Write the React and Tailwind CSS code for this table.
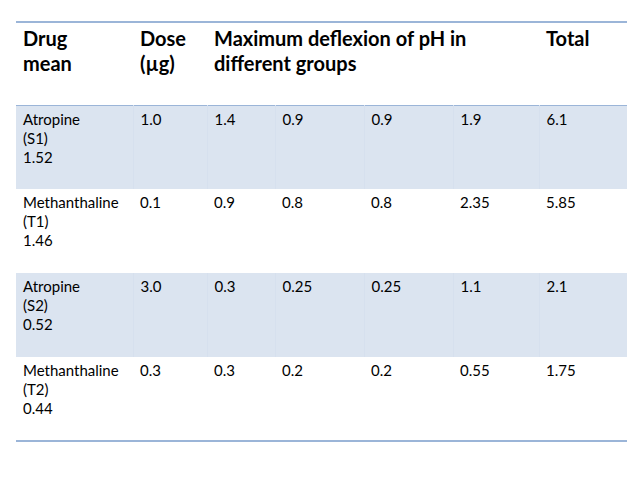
import React from 'react';

const rows = [
  { name: ['Atropine', '(S1)', '1.52'], vals: ['1.0', '1.4', '0.9', '0.9', '1.9', '6.1'], band: true },
  { name: ['Methanthaline', '(T1)', '1.46'], vals: ['0.1', '0.9', '0.8', '0.8', '2.35', '5.85'], band: false },
  { name: ['Atropine', '(S2)', '0.52'], vals: ['3.0', '0.3', '0.25', '0.25', '1.1', '2.1'], band: true },
  { name: ['Methanthaline', '(T2)', '0.44'], vals: ['0.3', '0.3', '0.2', '0.2', '0.55', '1.75'], band: false },
];

const widths = ['w-[117px]', 'w-[74px]', 'w-[68px]', 'w-[89px]', 'w-[89px]', 'w-[86px]', 'w-[88px]'];

const App = () => {
  return (
    <div className="w-[638px] h-[478px] bg-white pt-[21px] pl-[16px]" style={{ fontFamily: 'Lato, "Open Sans", sans-serif' }}>
      <table className="table-fixed border-collapse w-[611px] text-black">
        <colgroup>
          {widths.map((w, i) => <col key={i} className={w} />)}
        </colgroup>
        <thead>
          <tr className="h-[83px] border-t-2 border-[#9bb5d8] align-top text-[20px] font-bold leading-[25px]">
            <th className="text-left font-bold px-[7px] pt-[3px]">Drug<br />mean</th>
            <th className="text-left font-bold px-[7px] pt-[3px]">Dose<br />(µg)</th>
            <th colSpan={4} className="text-left font-bold px-[7px] pt-[3px]">Maximum deflexion of pH in<br />different groups</th>
            <th className="text-left font-bold px-[7px] pt-[3px]">Total</th>
          </tr>
        </thead>
        <tbody>
          {rows.map((r, i) => (
            <tr key={i} className={`h-[84px] align-top text-[15px] leading-[19px] ${r.band ? 'bg-[#dbe4f0]' : 'bg-white'} ${i === 0 ? 'border-t border-[#9bb5d8]' : ''} ${i === rows.length - 1 ? 'border-b-2 border-[#9bb5d8]' : ''}`}>
              <td className="px-[7px] pt-[4px]">
                {r.name.map((n, j) => <div key={j}>{n}</div>)}
              </td>
              {r.vals.map((v, j) => (
                <td key={j} className={`px-[7px] pt-[4px] ${r.band ? 'border-l border-[#d6e0ee]' : ''}`}>{v}</td>
              ))}
            </tr>
          ))}
        </tbody>
      </table>
    </div>
  );
};

export default App;
